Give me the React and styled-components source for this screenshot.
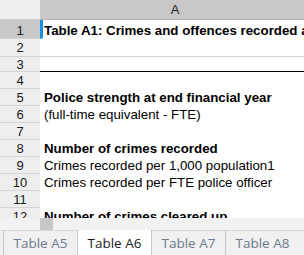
import React from "react";
import styled, { createGlobalStyle } from "styled-components";

const Global = createGlobalStyle`
  html, body { margin: 0; padding: 0; background: #ffffff; overflow: hidden; }
  #root { width: 304px; height: 255px; }
`;

const Sheet = styled.div`
  width: 304px;
  height: 255px;
  display: flex;
  flex-direction: column;
  overflow: hidden;
  font-family: "Liberation Sans", Arial, sans-serif;
`;

const Grid = styled.div`
  flex: 0 0 218px;
  display: grid;
  grid-template-columns: 40px 270px;
  overflow: hidden;
`;

const Corner = styled.div`
  height: 19px;
  background: #eeeeee;
  border-bottom: 1px solid #c8c8c8;
`;

const ColHeader = styled.div`
  height: 19px;
  background: #c8c8c8;
  border-bottom: 1px solid #b4b4b4;
  display: flex;
  align-items: center;
  justify-content: center;
  font-size: 13px;
  color: #222;
`;

const RowHead = styled.div`
  box-sizing: border-box;
  height: ${(p) => p.$h}px;
  border-bottom: 1px solid #d4d4d4;
  background: ${(p) => (p.$sel ? "#c8c8c8" : "#eeeeee")};
  display: flex;
  align-items: center;
  justify-content: center;
  font-size: 13px;
  color: #1a1a1a;
  padding-top: ${(p) => (p.$sel ? "2px" : "0")};
`;

const Cell = styled.div`
  box-sizing: border-box;
  height: ${(p) => p.$h}px;
  border-bottom: 1px solid ${(p) => p.$line || "#ffffff"};
  display: flex;
  align-items: center;
  white-space: nowrap;
  overflow: hidden;
  font-size: 13.3px;
  font-weight: ${(p) => (p.$bold ? 700 : 400)};
  color: #000;
  border-left: ${(p) => (p.$cursor ? "3px solid #1a8fe3" : "none")};
  padding-left: ${(p) => (p.$cursor ? "1px" : "4px")};
  padding-top: ${(p) => (p.$cursor ? "2px" : "0")};
`;

const ScrollBand = styled.div`
  flex: 0 0 12px;
  background: #f2f2f2;
  display: flex;
`;

const ScrollLeft = styled.div`
  width: 40px;
  background: #f2f2f2;
`;

const Thumb = styled.div`
  width: 13px;
  background: #c8c8c8;
`;

const TabBar = styled.div`
  flex: 1;
  background: #f0f0f0;
  border-top: 1px solid #d8d8d8;
  display: flex;
  padding-left: 3px;
`;

const Tab = styled.div`
  width: 73px;
  border-left: 1px solid #c8c8c8;
  background: ${(p) => (p.$active ? "#ffffff" : "transparent")};
  color: ${(p) => (p.$active ? "#1a1a1a" : "#6b7a8c")};
  display: flex;
  align-items: center;
  justify-content: center;
  font-family: "Open Sans", "Noto Sans", sans-serif;
  font-size: 13.5px;
  margin-top: -1px;
`;

const rows = [
  { n: 1, h: 19, text: "Table A1: Crimes and offences recorded and cleared up", bold: true, sel: true, cursor: true },
  { n: 2, h: 18, line: "#d4d4d4" },
  { n: 3, h: 15, line: "#000000" },
  { n: 4, h: 17 },
  { n: 5, h: 17, text: "Police strength at end financial year", bold: true },
  { n: 6, h: 17, text: "(full-time equivalent - FTE)" },
  { n: 7, h: 17 },
  { n: 8, h: 17, text: "Number of crimes recorded", bold: true },
  { n: 9, h: 17, text: "Crimes recorded per 1,000 population1" },
  { n: 10, h: 17, text: "Crimes recorded per FTE police officer" },
  { n: 11, h: 17 },
  { n: 12, h: 17, text: "Number of crimes cleared up", bold: true },
];

const tabs = ["Table A5", "Table A6", "Table A7", "Table A8"];

export default function App() {
  return (
    <>
      <Global />
      <Sheet>
        <Grid>
          <Corner />
          <ColHeader>A</ColHeader>
          {rows.map((r) => (
            <React.Fragment key={r.n}>
              <RowHead $h={r.h} $sel={r.sel}>{r.n}</RowHead>
              <Cell $h={r.h} $bold={r.bold} $line={r.line} $cursor={r.cursor}>
                {r.text || ""}
              </Cell>
            </React.Fragment>
          ))}
        </Grid>
        <ScrollBand>
          <ScrollLeft />
          <Thumb />
        </ScrollBand>
        <TabBar>
          {tabs.map((t) => (
            <Tab key={t} $active={t === "Table A6"}>{t}</Tab>
          ))}
        </TabBar>
      </Sheet>
    </>
  );
}
